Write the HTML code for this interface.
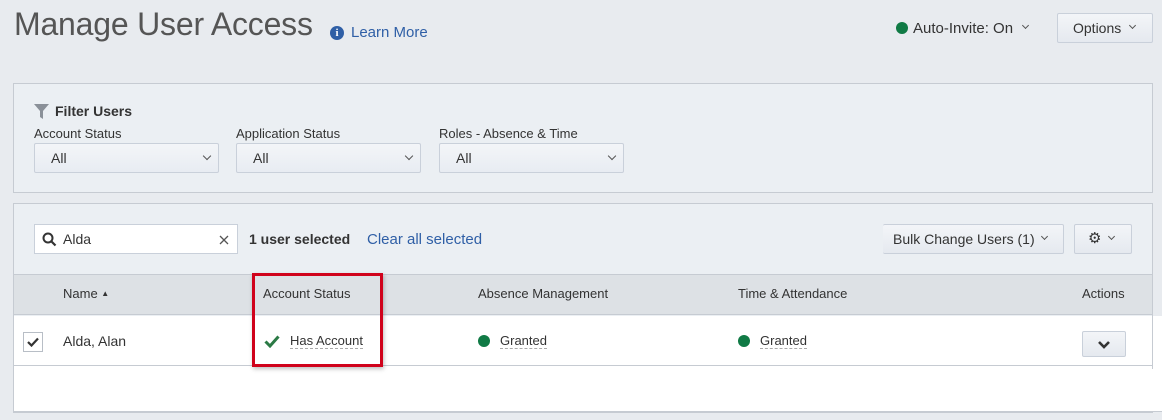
<!DOCTYPE html>
<html><head><meta charset="utf-8"><style>
*{box-sizing:border-box;margin:0;padding:0}
body{width:1162px;height:420px;background:#e8ebef;font-family:"Liberation Sans","DejaVu Sans",sans-serif;color:#333;position:relative;overflow:hidden;font-size:14px}
.a{position:absolute}
.title{left:14px;top:6px;font-size:32px;font-weight:normal;color:#555;letter-spacing:-0.2px}
.link{color:#2f5fa6}
.panel{background:#ebeff3;border:1px solid #c6cbd2}
.sel{background:linear-gradient(#f3f5f8,#e8ecf2);border:1px solid #c9d0da;border-radius:2px;height:30px;font-size:14px;padding:6px 16px;color:#333}
.chev{position:absolute;right:8px;top:9px;width:6px;height:6px;border-right:1.2px solid #555;border-bottom:1.2px solid #555;transform:rotate(45deg)}
.btn{background:linear-gradient(#f3f5f8,#e5e9ef);border:1px solid #c9d0da;border-radius:2px}
.dot{width:12px;height:12px;border-radius:50%;background:#107a45;display:inline-block}
.dash{border-bottom:1px dashed #aaa}
</style></head><body>
<div class="a title">Manage User Access</div>
<div class="a" style="left:330px;top:26px;width:14px;height:14px;border-radius:50%;background:#2f5fa6;color:#fff;font-size:11px;font-weight:bold;text-align:center;line-height:14px;font-family:'Liberation Serif',serif">i</div>
<div class="a link" style="left:351px;top:24px;font-size:15px">Learn More</div>
<div class="a dot" style="left:896px;top:22px"></div>
<div class="a" style="left:913px;top:20px;font-size:15px;color:#333">Auto-Invite: On</div>
<div class="a chev" style="left:1023px;top:23px;width:5px;height:5px"></div>
<div class="a btn" style="left:1057px;top:13px;width:96px;height:30px;font-size:14px;padding:6px 0 0 15px">Options</div>
<div class="a chev" style="left:1130px;top:23px;width:5px;height:5px"></div>

<div class="a panel" style="left:13px;top:83px;width:1140px;height:110px"></div>
<svg class="a" style="left:34px;top:104px" width="15" height="15" viewBox="0 0 15 15"><path d="M0 0H15L9 7V15L6 13V7Z" fill="#8a9098"/></svg>
<div class="a" style="left:55px;top:103px;font-weight:bold;font-size:14px">Filter Users</div>
<div class="a" style="left:34px;top:126px;font-size:13px">Account Status</div>
<div class="a" style="left:236px;top:126px;font-size:13px">Application Status</div>
<div class="a" style="left:439px;top:126px;font-size:13px">Roles - Absence &amp; Time</div>
<div class="a sel" style="left:34px;top:143px;width:185px">All<span class="chev"></span></div>
<div class="a sel" style="left:236px;top:143px;width:185px">All<span class="chev"></span></div>
<div class="a sel" style="left:439px;top:143px;width:185px">All<span class="chev"></span></div>

<div class="a panel" style="left:13px;top:203px;width:1140px;height:210px"></div>
<div class="a" style="left:34px;top:224px;width:204px;height:30px;background:#fff;border:1px solid #c9d0da"></div>
<svg class="a" style="left:42px;top:232px" width="15" height="15" viewBox="0 0 15 15"><circle cx="6" cy="6" r="4.5" fill="none" stroke="#333" stroke-width="2"/><path d="M9.5 9.5L13.5 13.5" stroke="#333" stroke-width="2.2"/></svg>
<div class="a" style="left:63px;top:231px;font-size:14px">Alda</div>
<svg class="a" style="left:219px;top:235px" width="10" height="10" viewBox="0 0 10 10"><path d="M1 1L9 9M9 1L1 9" stroke="#555" stroke-width="1.3"/></svg>
<div class="a" style="left:249px;top:231px;font-weight:bold;font-size:14px">1 user selected</div>
<div class="a link" style="left:367px;top:231px;font-size:15px">Clear all selected</div>
<div class="a btn" style="left:883px;top:224px;width:181px;height:30px;padding:6px 0 0 10px;font-size:14px;border-left:none">Bulk Change Users (1)</div>
<div class="a chev" style="left:1042px;top:234px;width:5px;height:5px"></div>
<div class="a btn" style="left:1074px;top:224px;width:58px;height:30px"></div>
<div class="a" style="left:1088px;top:229px;font-size:15px;color:#333">⚙</div>
<div class="a chev" style="left:1109px;top:234px;width:5px;height:5px"></div>

<div class="a" style="left:14px;top:274px;width:1138px;height:41px;background:#dde1e5;border-top:1px solid #c6cbd2;border-bottom:1px solid #c6cbd2"></div>
<div class="a" style="left:63px;top:286px;font-size:13px">Name <span style="font-size:8px;vertical-align:2px">▲</span></div>
<div class="a" style="left:263px;top:286px;font-size:13px">Account Status</div>
<div class="a" style="left:478px;top:286px;font-size:13px">Absence Management</div>
<div class="a" style="left:738px;top:286px;font-size:13px">Time &amp; Attendance</div>
<div class="a" style="left:1082px;top:286px;font-size:13px">Actions</div>

<div class="a" style="left:14px;top:316px;width:1148px;height:96px;background:#fff"></div>
<div class="a" style="left:1152px;top:316px;width:1px;height:53px;background:#c6cbd2"></div>
<div class="a" style="left:14px;top:365px;width:1138px;height:1px;background:#c6cbd2"></div>
<div class="a" style="left:14px;top:411px;width:1148px;height:1px;background:#c6cbd2"></div>
<div class="a" style="left:23px;top:332px;width:20px;height:20px;border:1px solid #b8bec6;background:#fff"></div>
<svg class="a" style="left:27px;top:337px" width="12" height="10" viewBox="0 0 12 10"><path d="M1 5L4.5 8.5L11 1.5" fill="none" stroke="#333" stroke-width="2.2"/></svg>
<div class="a" style="left:63px;top:333px;font-size:14px">Alda, Alan</div>
<svg class="a" style="left:264px;top:335px" width="16" height="13" viewBox="0 0 16 13"><path d="M1.5 6.5L6 11L14.5 1.5" fill="none" stroke="#2b7a45" stroke-width="3"/></svg>
<div class="a dash" style="left:290px;top:333px;font-size:13px">Has Account</div>
<div class="a dot" style="left:478px;top:335px"></div>
<div class="a dash" style="left:500px;top:333px;font-size:13px">Granted</div>
<div class="a dot" style="left:738px;top:335px"></div>
<div class="a dash" style="left:760px;top:333px;font-size:13px">Granted</div>
<div class="a btn" style="left:1082px;top:331px;width:44px;height:26px"></div>
<svg class="a" style="left:1097px;top:340px" width="14" height="9" viewBox="0 0 14 9"><path d="M2 2L7 7L12 2" fill="none" stroke="#333" stroke-width="2.6"/></svg>

<div class="a" style="left:252px;top:273px;width:131px;height:94px;border:3px solid #d0021b;box-shadow:1px 2px 4px rgba(0,0,0,0.25)"></div>
</body></html>
